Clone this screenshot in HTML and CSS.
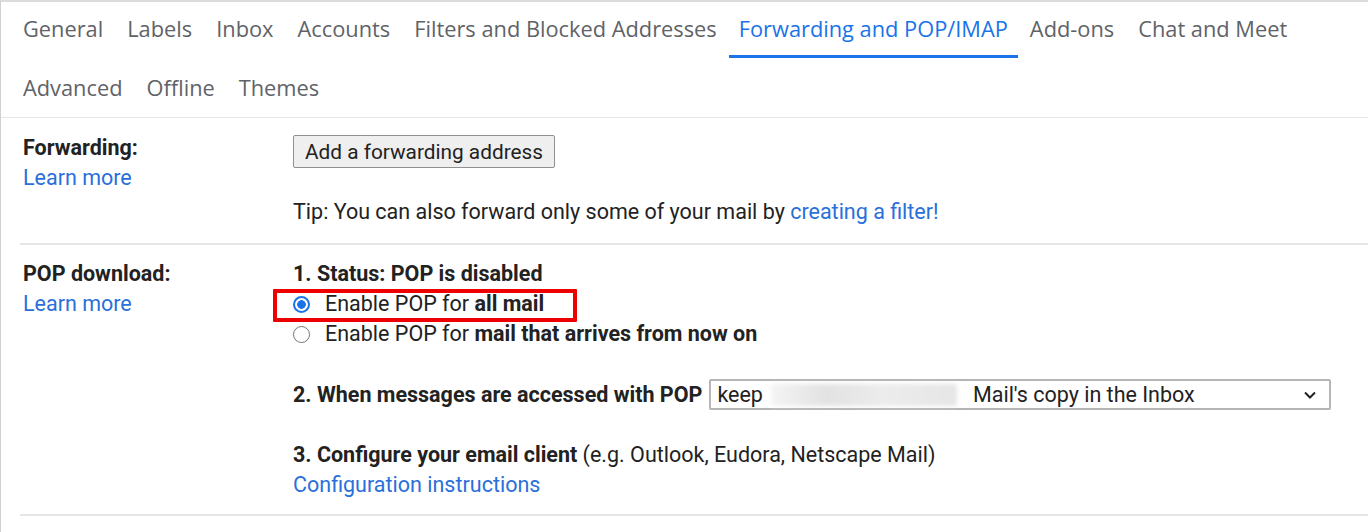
FILE: index.html
```html
<!DOCTYPE html>
<html>
<head>
<meta charset="utf-8">
<link rel="stylesheet" href="styles.css">
</head>
<body>
<div class="page">
  <nav class="tabs">
    <div class="tab-row first">
      <a class="tab">General</a>
      <a class="tab">Labels</a>
      <a class="tab">Inbox</a>
      <a class="tab">Accounts</a>
      <a class="tab">Filters and Blocked Addresses</a>
      <a class="tab active">Forwarding and POP/IMAP</a>
      <a class="tab">Add-ons</a>
      <a class="tab">Chat and Meet</a>
    </div>
    <div class="tab-row second">
      <a class="tab">Advanced</a>
      <a class="tab">Offline</a>
      <a class="tab">Themes</a>
    </div>
  </nav>

  <section class="setting fwd">
    <div class="label">
      <div class="label-title">Forwarding:</div>
      <a class="link">Learn more</a>
    </div>
    <div class="content">
      <button class="btn">Add a forwarding address</button>
      <p class="tip">Tip: You can also forward only some of your mail by <a class="link">creating a filter!</a></p>
    </div>
  </section>

  <section class="setting pop">
    <div class="label">
      <div class="label-title">POP download:</div>
      <a class="link">Learn more</a>
    </div>
    <div class="content">
      <div class="bold">1. Status: POP is disabled</div>
      <label class="radio highlighted"><span class="rb checked"></span>Enable POP for&nbsp;<b>all mail</b></label>
      <label class="radio"><span class="rb"></span>Enable POP for&nbsp;<b>mail that arrives from now on</b></label>
      <div class="when">
        <span class="bold">2. When messages are accessed with POP</span>
        <div class="select">
          <span class="sel-text">keep<span class="blur"></span>Mail's copy in the Inbox</span>
          <svg class="chev" width="14" height="10" viewBox="0 0 14 10"><path d="M2 2.5 L7 7.5 L12 2.5" fill="none" stroke="#222" stroke-width="2"/></svg>
        </div>
      </div>
      <div class="configure"><span class="bold">3. Configure your email client</span> (e.g. Outlook, Eudora, Netscape Mail)</div>
      <a class="link">Configuration instructions</a>
    </div>
  </section>
</div>
</body>
</html>
```

FILE: styles.css
```css
html, body {
  margin: 0;
  padding: 0;
  background: #fff;
}
body {
  font-family: Roboto, "Liberation Sans", sans-serif;
  color: #222;
  font-size: 21.5px;
}
.page {
  border-top: 2px solid #dcdcdc;
  border-left: 1px solid #d0d0d0;
  height: 530px;
  overflow: hidden;
}
.tabs {
  padding-left: 10px;
  border-bottom: 1px solid #e6e6e6;
}
.tab-row {
  display: flex;
}
.tab-row.first {
  height: 56px;
}
.tab-row.second {
  height: 59px;
}
.tab {
  font-family: "Open Sans", Roboto, sans-serif;
  font-size: 21.8px;
  color: #5f6368;
  padding: 0 12px;
  display: flex;
  align-items: center;
  box-sizing: border-box;
  border-bottom: 3px solid transparent;
}
.second .tab {
  border-bottom: 0;
}
.tab.active {
  color: #1a73e8;
  border-bottom-color: #1a73e8;
  padding: 0 10px;
}
.setting {
  display: flex;
  margin-left: 19px;
  border-bottom: 2px solid #e6e6e6;
}
.label {
  width: 270px;
  padding-left: 3px;
  flex: none;
  display: flex;
  flex-direction: column;
  align-items: flex-start;
  line-height: 30px;
}
.label-title,
.bold,
b {
  font-weight: bold;
}
.link {
  color: #2a6fdb;
  text-decoration: none;
}
.content {
  display: flex;
  flex-direction: column;
  align-items: flex-start;
}
.fwd {
  padding: 0 0 18px;
}
.fwd .label {
  padding-top: 15px;
}
.fwd .content {
  padding-top: 17px;
}
.btn {
  font-family: Roboto, sans-serif;
  font-size: 20.8px;
  color: #222;
  background: #efefef;
  border: 1px solid #8f8f8f;
  border-radius: 2px;
  padding: 0 11px;
  height: 33px;
}
.tip {
  margin: 31px 0 0;
  line-height: 26px;
}
.pop {
  padding: 14px 0 14px;
}
.pop .content {
  line-height: 30px;
}
.radio {
  position: relative;
  display: flex;
  align-items: center;
  height: 30px;
}
.rb {
  width: 17px;
  height: 17px;
  border: 1.5px solid #767676;
  border-radius: 50%;
  margin: 0 15px 0 0;
  box-sizing: border-box;
  flex: none;
}
.rb.checked {
  border: 2px solid #1a73e8;
  background: radial-gradient(circle, #1a73e8 0 4px, #fff 4.6px);
}
.highlighted::after {
  content: "";
  position: absolute;
  left: -20px;
  top: 0;
  width: 304px;
  height: 33px;
  border: 4px solid #ee0000;
  box-sizing: border-box;
  border-radius: 1px;
}
.when {
  display: flex;
  align-items: center;
  margin-top: 30px;
  height: 31px;
}
.select {
  margin-left: 7px;
  width: 622px;
  height: 31px;
  box-sizing: border-box;
  border: 2px solid #b5b5b5;
  border-radius: 2px;
  display: flex;
  align-items: center;
  justify-content: space-between;
  padding: 0 12px 0 6px;
}
.sel-text {
  display: flex;
  align-items: center;
  line-height: 26px;
}
.blur {
  display: inline-block;
  width: 186px;
  height: 22px;
  margin: 0 16px 0 8px;
  background: linear-gradient(90deg, #f4f4f4, #e2e2e2 30%, #ececec 60%, #e6e6e6);
  filter: blur(2px);
}
.chev {
  flex: none;
}
.configure {
  margin-top: 30px;
}
```
